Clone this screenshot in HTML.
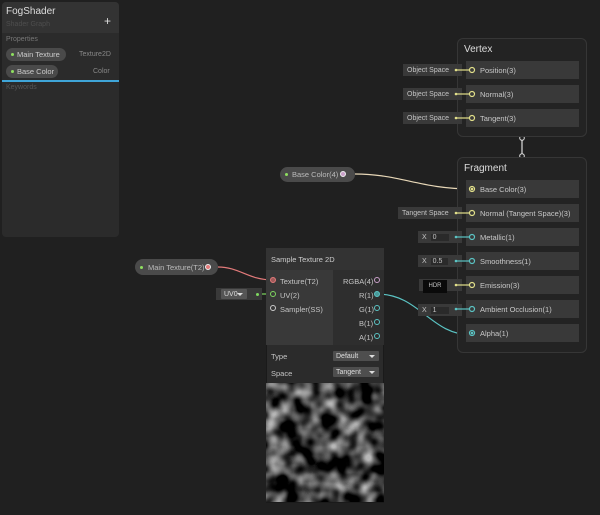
<!DOCTYPE html>
<html><head><style>
*{margin:0;padding:0;box-sizing:border-box}
body{width:600px;height:515px;background:#202020;position:relative;overflow:hidden;font-family:"Liberation Sans",sans-serif;color:#c4c4c4;font-size:7.5px}
.a{position:absolute}
.node{position:absolute;background:#232323;border:1px solid #363636;border-radius:6px}
.row{position:absolute;background:#393939;height:18px;left:466px;width:113px;padding-left:14px;line-height:19px;font-size:7.5px;color:#c8c8c8}
.lbl{position:absolute;background:#393939;height:12px;line-height:13px;font-size:7px;color:#c4c4c4;padding-left:4px}
.pill{position:absolute;background:#4a4a4a;border-radius:8px;font-size:7.5px;color:#ccc}
.dot{position:absolute;width:3px;height:3px;border-radius:50%}
.port{position:absolute;width:6px;height:6px;border-radius:50%;border:1.2px solid}
.dd{position:absolute;background:#4e4e4e;height:10px;font-size:7px;line-height:11px;padding-left:3px;color:#ddd;border-radius:1px}
.dd:after{content:"";position:absolute;right:4px;top:4px;border-left:3px solid transparent;border-right:3px solid transparent;border-top:3px solid #ddd}
</style></head><body>
<svg class="a" style="left:0;top:0" width="600" height="515">
<path d="M218 267 C240 267,248 280,273 280" stroke="#e27a7a" stroke-width="1.2" fill="none"/>
<path d="M355 174 C400 174,420 189,472 189" stroke="#e8d8b8" stroke-width="1.2" fill="none"/>
<path d="M377 294 C420 294,430 335,472 335" stroke="#5bc4c4" stroke-width="1.2" fill="none"/>
<path d="M259 294 L272 294" stroke="#7fd860" stroke-width="1.2"/>
<line x1="522" y1="138" x2="522" y2="156" stroke="#ddd" stroke-width="1.2"/>
<circle cx="522" cy="138" r="2.3" fill="#202020" stroke="#ddd"/>
<circle cx="522" cy="156" r="2.3" fill="#202020" stroke="#ddd"/>
</svg>

<div class="a" style="left:2px;top:2px;width:117px;height:235px;background:#2b2b2b;border-radius:4px"></div>
<div class="a" style="left:2px;top:2px;width:117px;height:31px;background:#333;border-radius:4px 4px 0 0"></div>
<div class="a" style="left:6px;top:6px;font-size:10px;color:#ddd">FogShader</div>
<div class="a" style="left:6px;top:21px;font-size:7px;color:#4e4e4e">Shader Graph</div>
<div class="a" style="left:104px;top:14px;font-size:12px;color:#ddd">+</div>
<div class="a" style="left:6px;top:36px;font-size:7px;color:#777">Properties</div>
<div class="pill" style="left:6px;top:48px;width:60px;height:13px;line-height:14px;padding-left:11px">Main Texture</div>
<div class="dot" style="left:11px;top:53px;background:#8fe060"></div>
<div class="a" style="left:79px;top:51px;font-size:7px;color:#888">Texture2D</div>
<div class="pill" style="left:6px;top:65px;width:52px;height:13px;line-height:14px;padding-left:11px">Base Color</div>
<div class="dot" style="left:11px;top:70px;background:#8fe060"></div>
<div class="a" style="left:93px;top:68px;font-size:7px;color:#888">Color</div>
<div class="a" style="left:2px;top:80px;width:117px;height:2px;background:#3fa5d8"></div>
<div class="a" style="left:6px;top:84px;font-size:7px;color:#555">Keywords</div>

<div class="node" style="left:457px;top:38px;width:130px;height:99px"></div>
<div class="a" style="left:464px;top:44px;font-size:10px;color:#ddd">Vertex</div>
<div class="row" style="top:61px">Position(3)</div>
<div class="row" style="top:85px">Normal(3)</div>
<div class="row" style="top:109px">Tangent(3)</div>
<div class="lbl" style="left:403px;top:64px;width:59px">Object Space</div>
<div class="lbl" style="left:403px;top:88px;width:59px">Object Space</div>
<div class="lbl" style="left:403px;top:112px;width:59px">Object Space</div>

<div class="node" style="left:457px;top:157px;width:130px;height:196px"></div>
<div class="a" style="left:464px;top:163px;font-size:10px;color:#ddd">Fragment</div>
<div class="row" style="top:180px">Base Color(3)</div>
<div class="row" style="top:204px">Normal (Tangent Space)(3)</div>
<div class="row" style="top:228px">Metallic(1)</div>
<div class="row" style="top:252px">Smoothness(1)</div>
<div class="row" style="top:276px">Emission(3)</div>
<div class="row" style="top:300px">Ambient Occlusion(1)</div>
<div class="row" style="top:324px">Alpha(1)</div>
<div class="lbl" style="left:398px;top:207px;width:64px">Tangent Space</div>
<div class="lbl" style="left:418px;top:231px;width:44px">X <span style="background:#2a2a2a;padding:0 12px 0 2px;margin-left:2px">0</span></div>
<div class="lbl" style="left:418px;top:255px;width:44px">X <span style="background:#2a2a2a;padding:0 6px 0 2px;margin-left:2px">0.5</span></div>
<div class="lbl" style="left:419px;top:279px;width:43px"><span style="display:inline-block;background:#0a0a0a;width:24px;text-align:center;font-size:6px">HDR</span></div>
<div class="lbl" style="left:418px;top:304px;width:44px">X <span style="background:#2a2a2a;padding:0 12px 0 2px;margin-left:2px">1</span></div>

<svg class="a" style="left:450px;top:0" width="30" height="360">
<g stroke-width="1.2" fill="none">
<g stroke="#e2e08a"><line x1="6" y1="70" x2="19" y2="70"/><line x1="6" y1="94" x2="19" y2="94"/><line x1="6" y1="118" x2="19" y2="118"/><line x1="6" y1="213" x2="19" y2="213"/><line x1="6" y1="285" x2="19" y2="285"/></g>
<g stroke="#5bc4c4"><line x1="6" y1="237" x2="19" y2="237"/><line x1="6" y1="261" x2="19" y2="261"/><line x1="6" y1="309" x2="19" y2="309"/></g>
<g stroke="#e2e08a"><circle cx="22" cy="70" r="2.5"/><circle cx="22" cy="94" r="2.5"/><circle cx="22" cy="118" r="2.5"/><circle cx="22" cy="213" r="2.5"/><circle cx="22" cy="285" r="2.5"/><circle cx="22" cy="189" r="2.5"/></g>
<g stroke="#5bc4c4"><circle cx="22" cy="237" r="2.5"/><circle cx="22" cy="261" r="2.5"/><circle cx="22" cy="309" r="2.5"/><circle cx="22" cy="333" r="2.5"/></g>
</g>
<g fill="#e2e08a"><circle cx="6" cy="70" r="1.3"/><circle cx="6" cy="94" r="1.3"/><circle cx="6" cy="118" r="1.3"/><circle cx="6" cy="213" r="1.3"/><circle cx="6" cy="285" r="1.3"/><circle cx="22" cy="189" r="1.3"/></g>
<g fill="#5bc4c4"><circle cx="6" cy="237" r="1.3"/><circle cx="6" cy="261" r="1.3"/><circle cx="6" cy="309" r="1.3"/><circle cx="22" cy="333" r="1.3"/></g>
</svg>

<div class="pill" style="left:280px;top:167px;width:75px;height:15px;line-height:16px;padding-left:12px;color:#bbb">Base Color(4)</div>
<div class="dot" style="left:285px;top:173px;background:#8fe060"></div>
<div class="a" style="left:340px;top:171px;width:6px;height:6px;border-radius:50%;background:#c9a0c9;border:1px solid #eee"></div>
<div class="pill" style="left:135px;top:259px;width:83px;height:16px;line-height:17px;padding-left:13px;color:#bbb">Main Texture(T2)</div>
<div class="dot" style="left:140px;top:266px;background:#8fe060"></div>
<div class="a" style="left:205px;top:264px;width:6px;height:6px;border-radius:50%;background:#e27a7a;border:1px solid #eee"></div>

<div class="a" style="left:266px;top:248px;width:118px;height:255px;background:#2b2b2b;border:1px solid #1a1a1a"></div>
<div class="a" style="left:266px;top:248px;width:118px;height:22px;background:#333;padding:7px 0 0 5px;font-size:7.5px;color:#ccc">Sample Texture 2D</div>
<div class="a" style="left:266px;top:270px;width:67px;height:75px;background:#393939"></div>
<div class="a" style="left:333px;top:270px;width:51px;height:75px;background:#2e2e2e"></div>
<div class="a" style="left:280px;top:277px;font-size:7.5px">Texture(T2)</div>
<div class="a" style="left:280px;top:291px;font-size:7.5px">UV(2)</div>
<div class="a" style="left:280px;top:305px;font-size:7.5px">Sampler(SS)</div>
<div class="port" style="left:270px;top:277px;border-color:#e27a7a;background:#a05a5a"></div>
<div class="port" style="left:270px;top:291px;border-color:#7fd860"></div>
<div class="port" style="left:270px;top:305px;border-color:#ccc"></div>
<div class="a" style="left:343px;top:277px;font-size:7.5px">RGBA(4)</div>
<div class="a" style="left:359px;top:291px;font-size:7.5px">R(1)</div>
<div class="a" style="left:359px;top:305px;font-size:7.5px">G(1)</div>
<div class="a" style="left:359px;top:319px;font-size:7.5px">B(1)</div>
<div class="a" style="left:359px;top:333px;font-size:7.5px">A(1)</div>
<div class="port" style="left:374px;top:277px;border-color:#c9a0c9"></div>
<div class="port" style="left:374px;top:291px;border-color:#5bc4c4;background:#4a9a9a"></div>
<div class="port" style="left:374px;top:305px;border-color:#5bc4c4"></div>
<div class="port" style="left:374px;top:319px;border-color:#5bc4c4"></div>
<div class="port" style="left:374px;top:333px;border-color:#5bc4c4"></div>
<div class="a" style="left:271px;top:352px;font-size:7.5px">Type</div>
<div class="a" style="left:271px;top:369px;font-size:7.5px">Space</div>
<div class="dd" style="left:333px;top:351px;width:46px">Default</div>
<div class="dd" style="left:333px;top:367px;width:46px">Tangent</div>
<svg class="a" style="left:266px;top:383px" width="118" height="119">
<filter id="n" x="0" y="0" width="100%" height="100%" color-interpolation-filters="sRGB"><feTurbulence type="fractalNoise" baseFrequency="0.055" numOctaves="2" seed="7"/><feColorMatrix type="matrix" values="0 0 0 0 0  0 0 0 0 0  0 0 0 0 0  1 0 0 0 0"/><feComponentTransfer><feFuncA type="linear" slope="2.6" intercept="-0.95"/></feComponentTransfer><feColorMatrix type="matrix" values="0 0 0 0.72 0  0 0 0 0.72 0  0 0 0 0.72 0  0 0 0 0 1"/></filter>
<rect width="118" height="119" fill="#000"/>
<rect width="118" height="119" filter="url(#n)"/>
</svg>

<div class="a" style="left:216px;top:288px;width:46px;height:12px;background:#393939"></div>
<div class="dd" style="left:221px;top:289px;width:26px;background:#555">UV0</div>
<div class="dot" style="left:256px;top:293px;background:#7fd860"></div>
</body></html>
